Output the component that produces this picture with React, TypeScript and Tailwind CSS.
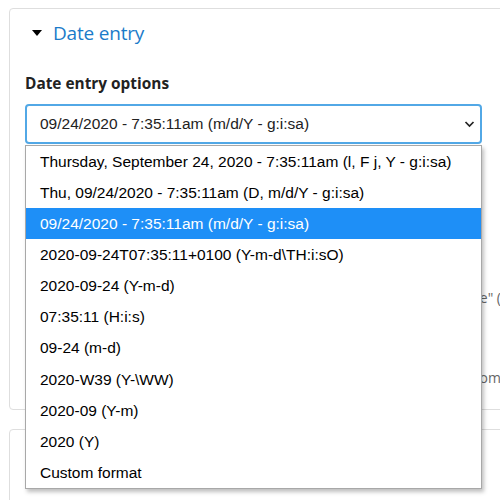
import React from "react";

const options = [
  "Thursday, September 24, 2020 - 7:35:11am (l, F j, Y - g:i:sa)",
  "Thu, 09/24/2020 - 7:35:11am (D, m/d/Y - g:i:sa)",
  "09/24/2020 - 7:35:11am (m/d/Y - g:i:sa)",
  "2020-09-24T07:35:11+0100 (Y-m-d\\TH:i:sO)",
  "2020-09-24 (Y-m-d)",
  "07:35:11 (H:i:s)",
  "09-24 (m-d)",
  "2020-W39 (Y-\\WW)",
  "2020-09 (Y-m)",
  "2020 (Y)",
  "Custom format",
];

export default function App() {
  return (
    <div className="relative w-[500px] h-[500px] overflow-hidden bg-white font-['Open_Sans','Noto_Sans',sans-serif]">
      <div className="ml-[9px] mt-[8px] w-[600px] h-[402px] border border-[#dedede] rounded-[4px] bg-white">
        <div className="flex items-center pt-[12px] h-[36px] pl-[22px]">
          <div className="w-0 h-0 border-l-[5px] border-r-[5px] border-t-[6px] border-l-transparent border-r-transparent border-t-black" />
          <span className="ml-[11px] text-[19px] tracking-[-0.2px] leading-[24px] text-[#1b7bc9]">Date entry</span>
        </div>
        <div className="pl-[15px] mt-[29px] text-[15.4px] leading-[20px] font-bold text-[#222]">Date entry options</div>
        <div className="relative ml-[15px] mt-[10px] w-[457px]">
          <div className="h-[40px] border-2 border-[#52a8e6] rounded-[4px] flex items-center justify-between pl-[13px] pr-[5px] font-['Liberation_Sans',Arial,sans-serif] text-[15.5px] text-[#222]">
            <span>09/24/2020 - 7:35:11am (m/d/Y - g:i:sa)</span>
            <svg width="11" height="8" viewBox="0 0 11 8" fill="none">
              <path d="M1.5 2 L5.5 6 L9.5 2" stroke="#222" strokeWidth="1.7" />
            </svg>
          </div>
          <div className="mt-[144px] text-[14px] leading-[20px] text-[#666] whitespace-nowrap w-[476px] text-right">
            Select the "Custom value" (
          </div>
          <div className="mt-[60px] text-[14px] leading-[20px] text-[#666] whitespace-nowrap w-[476px] text-right">
            from the list or enter a custom
          </div>
          <div className="absolute left-0 top-[41px] w-[457px] bg-white border border-[#a8a8a8] shadow-[2px_3px_4px_rgba(0,0,0,0.25)] font-['Liberation_Sans',Arial,sans-serif] text-[15.5px] text-black">
            {options.map((o, i) => (
              <div
                key={i}
                className={
                  i === 2
                    ? "h-[31.1px] flex items-center pl-[14px] bg-[#1e8ff7] text-white"
                    : "h-[31.1px] flex items-center pl-[14px]"
                }
              >
                {o}
              </div>
            ))}
          </div>
        </div>
      </div>
      <div className="ml-[9px] mt-[19px] w-[600px] h-[200px] border border-[#dedede] rounded-[4px] bg-white" />
    </div>
  );
}
